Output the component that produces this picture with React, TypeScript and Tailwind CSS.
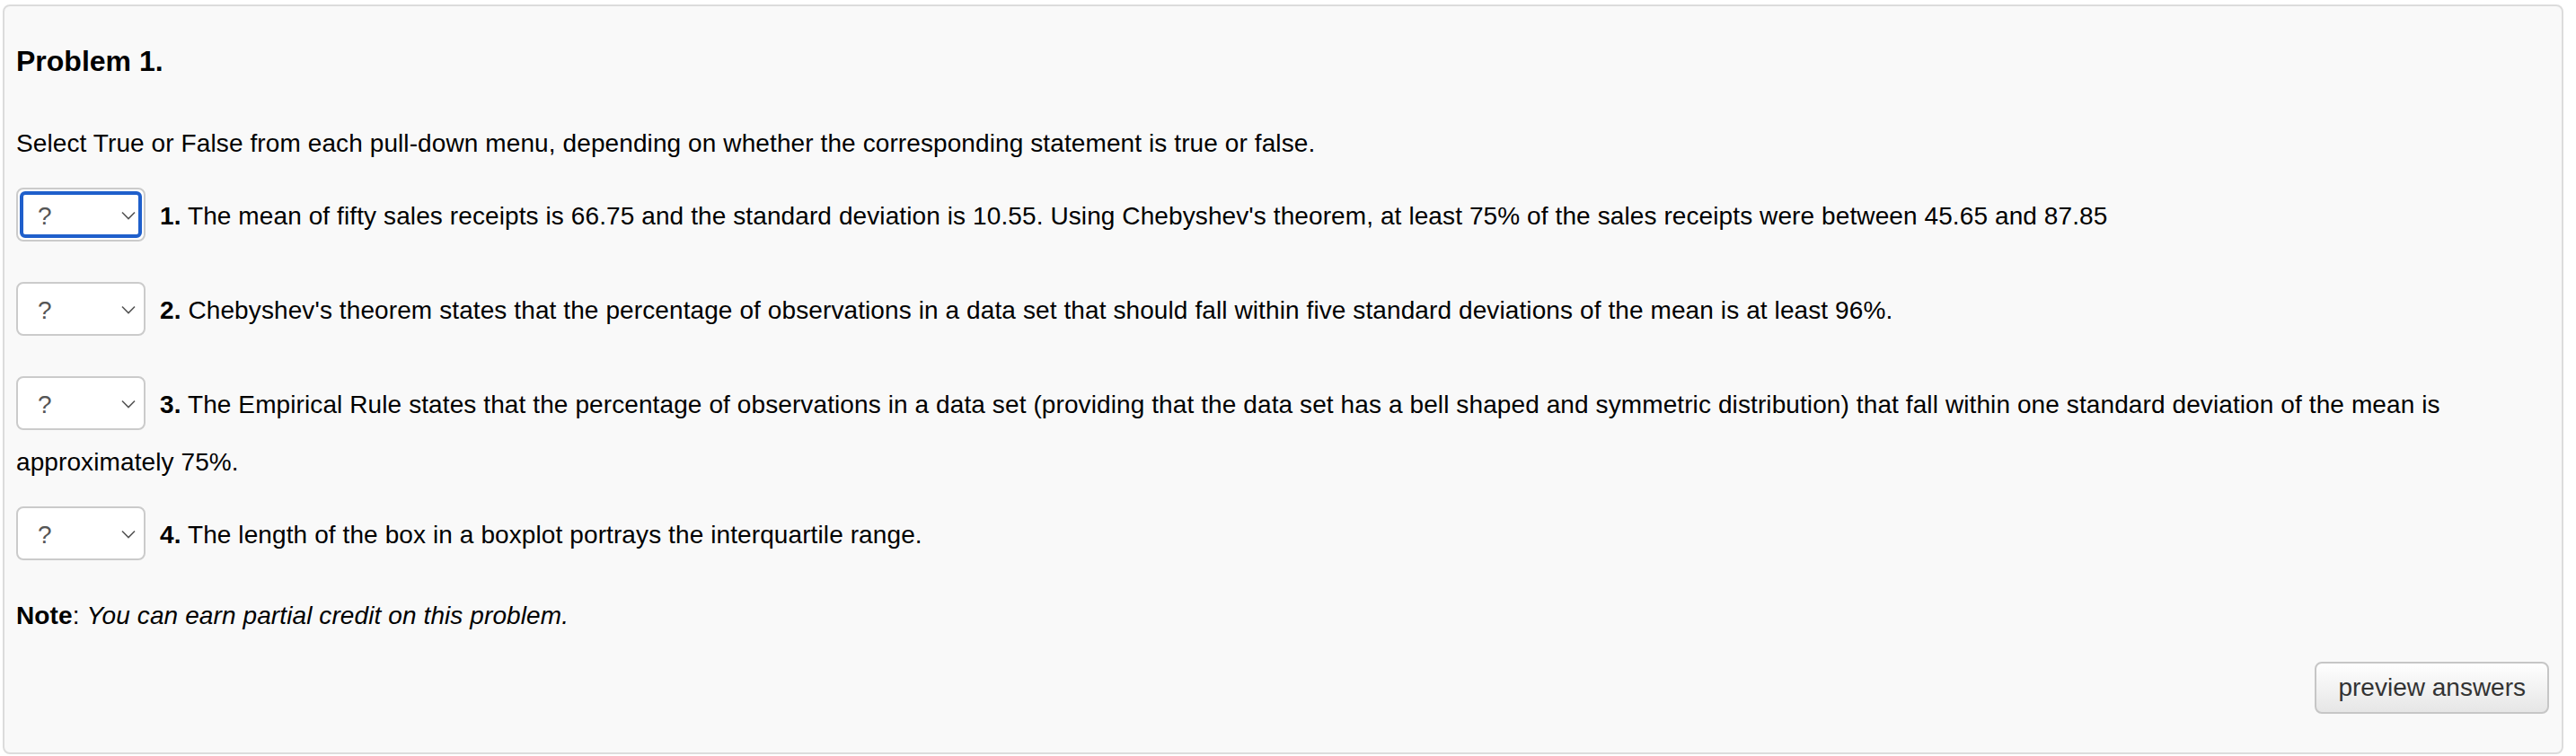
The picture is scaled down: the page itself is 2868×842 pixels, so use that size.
const font = { fontFamily: '"Liberation Sans", Arial, Helvetica, sans-serif' };

type Item = {
  num: string;
  text: string;
  focused?: boolean;
};

const items: Item[] = [
  {
    num: "1.",
    text: "The mean of fifty sales receipts is 66.75 and the standard deviation is 10.55. Using Chebyshev's theorem, at least 75% of the sales receipts were between 45.65 and 87.85",
    focused: true,
  },
  {
    num: "2.",
    text: "Chebyshev's theorem states that the percentage of observations in a data set that should fall within five standard deviations of the mean is at least 96%.",
  },
  {
    num: "3.",
    text: "The Empirical Rule states that the percentage of observations in a data set (providing that the data set has a bell shaped and symmetric distribution) that fall within one standard deviation of the mean is approximately 75%.",
  },
  {
    num: "4.",
    text: "The length of the box in a boxplot portrays the interquartile range.",
  },
];

function Chevron() {
  return (
    <svg
      width="16"
      height="10"
      viewBox="0 0 16 10"
      fill="none"
      className="absolute right-[3px] top-[18px]"
    >
      <path d="M1 1.5 L8 8.5 L15 1.5" stroke="#555" strokeWidth="1.6" />
    </svg>
  );
}

function TrueFalseSelect({ focused }: { focused?: boolean }) {
  return (
    <span className="inline-block align-baseline w-[144px] h-[60px] mr-[16px] mb-[16px] rounded-[8px] border-2 border-[#cbcbcb] bg-white p-[2px]">
      <span
        className={
          focused
            ? "relative block h-full rounded-[6px] border-[4px] border-[#1f5fcb] pl-[16px] pt-[3px] leading-[42px] text-[#555]"
            : "relative block h-full rounded-[6px] border-[4px] border-transparent pl-[16px] pt-[3px] leading-[42px] text-[#555]"
        }
      >
        ?
        <Chevron />
      </span>
    </span>
  );
}

export default function App() {
  return (
    <div className="w-[2868px] h-[842px] bg-white pt-[5px] pl-[3px]" style={font}>
      <div className="w-[2851px] h-[835px] rounded-[8px] border-2 border-[#dcdcdc] bg-[#f9f9f9] px-[13px] pt-[41px] text-[28px] leading-[40px] text-black">
        <h3 className="text-[32px] font-bold leading-[40px]">Problem 1.</h3>

        <div className="tracking-[0.1px]">
          <p className="mt-[52px]">
            Select True or False from each pull-down menu, depending on whether the corresponding
            statement is true or false.
          </p>

          {items.map((item) => (
            <div key={item.num} className="mt-[29px]">
              <TrueFalseSelect focused={item.focused} />
              <b>{item.num}</b> {item.text}
            </div>
          ))}

          <p className="mt-[26px]">
            <b>Note</b>: <i>You can earn partial credit on this problem.</i>
          </p>
        </div>

        <div className="mt-[31px] flex justify-end pr-[1px]">
          <button
            className="h-[58px] rounded-[8px] border-2 border-[#c6c6c6] bg-gradient-to-b from-white to-[#e6e6e6] px-[24px] text-[28px] leading-[54px] text-[#333]"
            style={font}
          >
            preview answers
          </button>
        </div>
      </div>
    </div>
  );
}
